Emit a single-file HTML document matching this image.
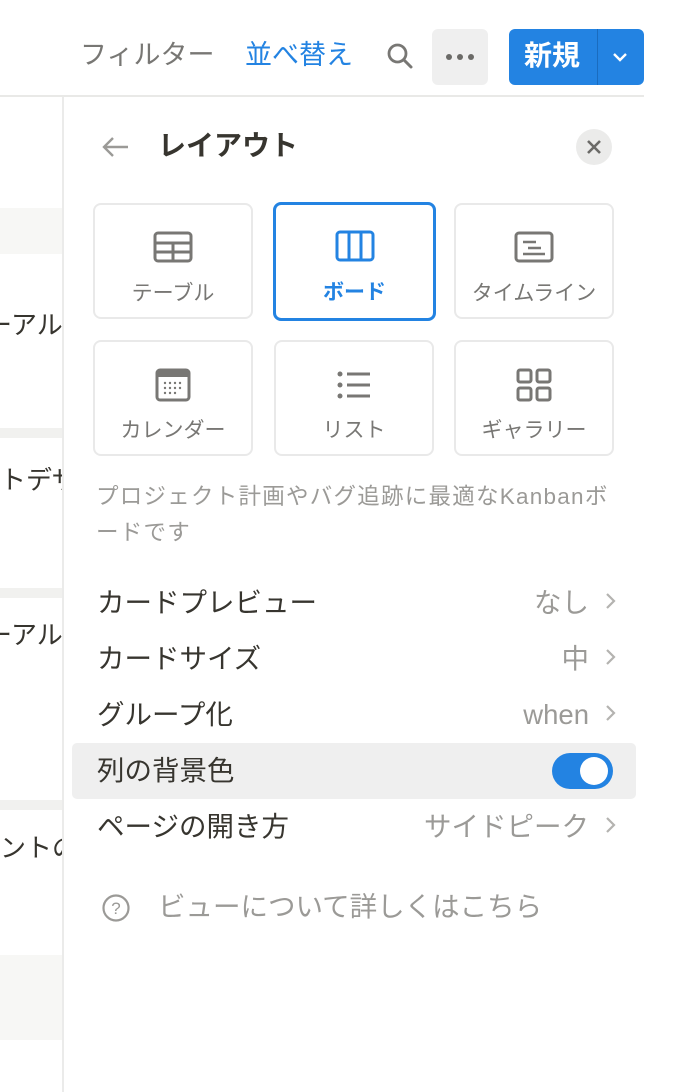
<!DOCTYPE html><html><head><meta charset="utf-8"><style>
*{margin:0;padding:0;box-sizing:border-box}
body{width:676px;height:1092px;background:#fff;position:relative;overflow:hidden;font-family:"Liberation Sans","Noto Sans CJK JP",sans-serif}
.a{position:absolute}
.t{white-space:nowrap;line-height:1}
.tile{position:absolute;border:2px solid #e9e9e9;border-radius:8px;width:160px;height:116px}
.tile .lb{position:absolute;left:0;right:0;top:72px;text-align:center;font-size:21px;color:#787774}
.tile svg{position:absolute;left:50%;top:26px;transform:translateX(-50%)}
.row{position:absolute;left:97px;width:520px;font-size:27.5px;color:#37352f;line-height:1}
.row .v{position:absolute;right:28px;color:#9b9a97}
.row .c{position:absolute;right:0;top:3px}
</style></head><body>
<!-- header -->
<div class="a t" style="left:80px;top:42px;font-size:27px;color:#787774">フィルター</div>
<div class="a t" style="left:245px;top:42px;font-size:27px;color:#2383e2">並べ替え</div>
<svg class="a" style="left:385px;top:41px" width="30" height="30" viewBox="0 0 30 30"><circle cx="12.5" cy="12.5" r="8.5" fill="none" stroke="#787774" stroke-width="2.8"/><path d="M19 19l7 7" stroke="#787774" stroke-width="3" stroke-linecap="round"/></svg>
<div class="a" style="left:432px;top:29px;width:56px;height:56px;background:#efefef;border-radius:6px"></div>
<div class="a" style="left:446px;top:54px;width:6px;height:6px;border-radius:3px;background:#6b6a67"></div>
<div class="a" style="left:457px;top:54px;width:6px;height:6px;border-radius:3px;background:#6b6a67"></div>
<div class="a" style="left:468px;top:54px;width:6px;height:6px;border-radius:3px;background:#6b6a67"></div>
<div class="a" style="left:509px;top:29px;width:135px;height:56px;background:#2383e2;border-radius:6px"></div>
<div class="a" style="left:597px;top:29px;width:1px;height:56px;background:#1a6cbf"></div>
<div class="a t" style="left:524px;top:42px;font-size:28px;font-weight:bold;color:#fff">新規</div>
<svg class="a" style="left:611px;top:50px" width="18" height="14" viewBox="0 0 18 14"><path d="M3 4l6 6 6-6" fill="none" stroke="#fff" stroke-width="2.4"/></svg>
<div class="a" style="left:0;top:95px;width:644px;height:2px;background:#e9e9e7"></div>
<div class="a" style="left:62px;top:97px;width:2px;height:995px;background:#ebebea"></div>
<!-- left strip -->
<div class="a" style="left:0;top:208px;width:62px;height:46px;background:#f7f7f5"></div>
<div class="a" style="left:0;top:428px;width:62px;height:10px;background:#f1f1ef"></div>
<div class="a" style="left:0;top:588px;width:62px;height:10px;background:#f1f1ef"></div>
<div class="a" style="left:0;top:800px;width:62px;height:10px;background:#f1f1ef"></div>
<div class="a" style="left:0;top:955px;width:62px;height:85px;background:#f7f7f5"></div>
<div class="a t" style="left:-14px;top:312px;font-size:26px;color:#37352f;width:76px;overflow:hidden">ーアルラ</div>
<div class="a t" style="left:0px;top:467px;font-size:26px;color:#37352f;width:62px;overflow:hidden">トデザ</div>
<div class="a t" style="left:-14px;top:622px;font-size:26px;color:#37352f;width:76px;overflow:hidden">ーアルラ</div>
<div class="a t" style="left:0px;top:835px;font-size:26px;color:#37352f;width:62px;overflow:hidden">ントの</div>
<!-- panel -->
<svg class="a" style="left:100px;top:135px" width="32" height="24" viewBox="0 0 32 24"><path d="M28 12H4M13 3L4 12l9 9" fill="none" stroke="#9b9a97" stroke-width="2.4"/></svg>
<div class="a t" style="left:158px;top:132px;font-size:28px;font-weight:bold;color:#37352f">レイアウト</div>
<div class="a" style="left:576px;top:129px;width:36px;height:36px;border-radius:18px;background:#ebebea"></div>
<svg class="a" style="left:585px;top:138px" width="18" height="18" viewBox="0 0 18 18"><path d="M3 3l12 12M15 3L3 15" stroke="#6b6a67" stroke-width="2.6"/></svg>

<div class="tile" style="left:93px;top:203px"><svg width="40" height="32" viewBox="0 0 40 32"><rect x="2" y="2" width="36" height="28" rx="3" fill="none" stroke="#787774" stroke-width="3"/><path d="M2 12h36M2 21h36M20 12v18" stroke="#787774" stroke-width="3"/></svg><div class="lb">テーブル</div></div>
<div class="tile" style="left:273px;top:202px;width:163px;height:119px;border:3px solid #2383e2"><svg width="40" height="32" viewBox="0 0 40 32" style="top:25px"><rect x="2" y="2" width="36" height="28" rx="3" fill="none" stroke="#2383e2" stroke-width="3"/><path d="M14 2v28M26 2v28" stroke="#2383e2" stroke-width="3"/></svg><div class="lb" style="color:#2383e2;font-weight:bold;top:71px">ボード</div></div>
<div class="tile" style="left:454px;top:203px"><svg width="40" height="32" viewBox="0 0 40 32"><rect x="2" y="2" width="36" height="28" rx="3" fill="none" stroke="#787774" stroke-width="3"/><path d="M9 11h13M14 17h13M9 23h22" stroke="#787774" stroke-width="2.4"/></svg><div class="lb">タイムライン</div></div>

<div class="tile" style="left:93px;top:340px"><svg width="36" height="34" viewBox="0 0 36 34"><rect x="2" y="2" width="32" height="30" rx="3" fill="none" stroke="#787774" stroke-width="3"/><rect x="2" y="2" width="32" height="7" fill="#787774"/><g fill="#787774"><circle cx="10" cy="15" r="1.2"/><circle cx="15" cy="15" r="1.2"/><circle cx="20" cy="15" r="1.2"/><circle cx="25" cy="15" r="1.2"/><circle cx="10" cy="20" r="1.2"/><circle cx="15" cy="20" r="1.2"/><circle cx="20" cy="20" r="1.2"/><circle cx="25" cy="20" r="1.2"/><circle cx="10" cy="25" r="1.2"/><circle cx="15" cy="25" r="1.2"/><circle cx="20" cy="25" r="1.2"/></g></svg><div class="lb">カレンダー</div></div>
<div class="tile" style="left:274px;top:340px"><svg width="36" height="34" viewBox="0 0 36 34"><g fill="#787774"><circle cx="4" cy="6" r="2.5"/><circle cx="4" cy="17" r="2.5"/><circle cx="4" cy="28" r="2.5"/></g><path d="M11 6h23M11 17h23M11 28h23" stroke="#787774" stroke-width="3"/></svg><div class="lb">リスト</div></div>
<div class="tile" style="left:454px;top:340px"><svg width="36" height="34" viewBox="0 0 36 34"><g fill="none" stroke="#787774" stroke-width="3"><rect x="2" y="2" width="13" height="12" rx="2"/><rect x="21" y="2" width="13" height="12" rx="2"/><rect x="2" y="20" width="13" height="12" rx="2"/><rect x="21" y="20" width="13" height="12" rx="2"/></g></svg><div class="lb">ギャラリー</div></div>

<div class="a" style="left:96px;top:479px;width:540px;font-size:22.5px;letter-spacing:1.25px;line-height:36px;color:#9b9a97;white-space:nowrap">プロジェクト計画やバグ追跡に最適なKanbanボ<br>ードです</div>

<div class="a" style="left:72px;top:743px;width:564px;height:56px;background:#efefef;border-radius:5px"></div>
<svg width="0" height="0" style="position:absolute"><defs><path id="ch" d="M2 2l7 7-7 7" fill="none" stroke="#b4b3b0" stroke-width="2.2"/></defs></svg>
<div class="row" style="top:589px">カードプレビュー<span class="v">なし</span><svg class="c" width="12" height="20"><use href="#ch"/></svg></div>
<div class="row" style="top:645px">カードサイズ<span class="v">中</span><svg class="c" width="12" height="20"><use href="#ch"/></svg></div>
<div class="row" style="top:701px">グループ化<span class="v">when</span><svg class="c" width="12" height="20"><use href="#ch"/></svg></div>
<div class="row" style="top:757px">列の背景色</div>
<div class="a" style="left:552px;top:753px;width:61px;height:36px;border-radius:18px;background:#2383e2"></div>
<div class="a" style="left:580px;top:757px;width:28px;height:28px;border-radius:14px;background:#fff"></div>
<div class="row" style="top:813px">ページの開き方<span class="v">サイドピーク</span><svg class="c" width="12" height="20"><use href="#ch"/></svg></div>

<svg class="a" style="left:101px;top:893px" width="30" height="30" viewBox="0 0 30 30"><circle cx="15" cy="15" r="12.5" fill="none" stroke="#9b9a97" stroke-width="2.2"/><text x="15" y="21" text-anchor="middle" font-size="17" fill="#9b9a97" font-family="Liberation Sans">?</text></svg>
<div class="a t" style="left:158px;top:893px;font-size:27.5px;color:#9b9a97">ビューについて詳しくはこちら</div>
</body></html>
